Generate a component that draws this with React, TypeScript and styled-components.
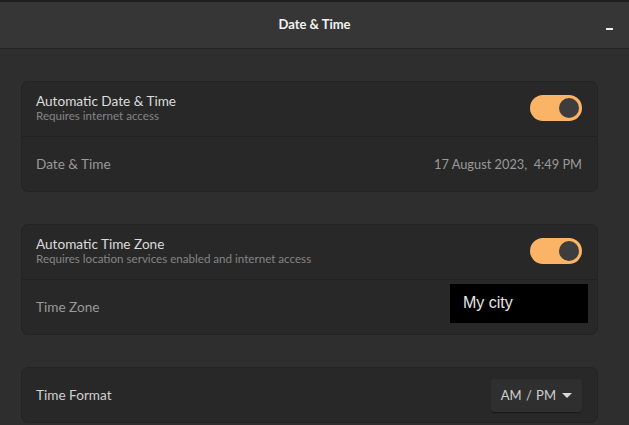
import React, { useState } from 'react'
import styled, { createGlobalStyle } from 'styled-components'

const GlobalStyle = createGlobalStyle`
  html, body {
    margin: 0;
    padding: 0;
    background: #2e2e2e;
  }
  body {
    font-family: 'Lato', 'Noto Sans', sans-serif;
    width: 629px;
    height: 425px;
    overflow: hidden;
  }
`

const App: React.FC = () => {
  const [autoDate, setAutoDate] = useState(true)
  const [autoZone, setAutoZone] = useState(true)
  const [city, setCity] = useState('My city')
  return (
    <Window>
      <GlobalStyle />
      <TopStrip />
      <Header>
        <Title>Date &amp; Time</Title>
        <Minimize aria-label="minimize" />
      </Header>
      <Content>
        <Card>
          <Row>
            <Labels>
              <Label>Automatic Date &amp; Time</Label>
              <Sub>Requires internet access</Sub>
            </Labels>
            <Toggle on={autoDate} onClick={() => setAutoDate(!autoDate)}>
              <Knob />
            </Toggle>
          </Row>
          <Row>
            <Label muted>Date &amp; Time</Label>
            <Value>17 August 2023,&nbsp; 4:49 PM</Value>
          </Row>
        </Card>
        <Card>
          <Row>
            <Labels>
              <Label>Automatic Time Zone</Label>
              <Sub>Requires location services enabled and internet access</Sub>
            </Labels>
            <Toggle on={autoZone} onClick={() => setAutoZone(!autoZone)}>
              <Knob />
            </Toggle>
          </Row>
          <Row>
            <Label muted>Time Zone</Label>
            <CityInput value={city} onChange={(e) => setCity(e.target.value)} />
          </Row>
        </Card>
        <Card>
          <Row>
            <Label light>Time Format</Label>
            <Dropdown>
              AM / PM
              <Caret />
            </Dropdown>
          </Row>
        </Card>
      </Content>
    </Window>
  )
}
export default App

const Window = styled.div`
  display: flex;
  flex-direction: column;
  height: 425px;
  background: #2e2e2e;
`
const TopStrip = styled.div`
  height: 2px;
  background: #1e1e1e;
`
const Header = styled.header`
  position: relative;
  height: 46px;
  display: flex;
  align-items: center;
  justify-content: center;
  background: #363636;
  border-bottom: 1px solid #232323;
`
const Title = styled.h1`
  margin: 0;
  font-size: 13px;
  font-weight: 700;
  color: #f2f2f2;
  margin-top: -3px;
`
const Minimize = styled.span`
  position: absolute;
  right: 16px;
  top: 26px;
  width: 7px;
  height: 2px;
  background: #eeeeee;
`
const Content = styled.main`
  display: flex;
  flex-direction: column;
  gap: 32px;
  padding: 32px 31px 0 21px;
`
const Card = styled.section`
  display: flex;
  flex-direction: column;
  background: #282828;
  border: 1px solid #232323;
  border-radius: 7px;
  & > div + div {
    border-top: 1px solid #222222;
  }
`
const Row = styled.div`
  height: 54px;
  display: flex;
  align-items: center;
  justify-content: space-between;
  padding: 0 15px 0 14px;
`
const Labels = styled.div`
  display: flex;
  flex-direction: column;
  gap: 0;
  margin-top: -3px;
`
const Label = styled.span<{ muted?: boolean; light?: boolean }>`
  font-size: 13.6px;
  color: ${(p) => (p.muted ? '#9a9a9a' : p.light ? '#cfcfcf' : '#dcdcdc')};
`
const Sub = styled.span`
  font-size: 11.6px;
  color: #858585;
`
const Toggle = styled.button<{ on: boolean }>`
  width: 52px;
  height: 26px;
  border-radius: 13px;
  border: none;
  padding: 3px;
  display: flex;
  justify-content: ${(p) => (p.on ? 'flex-end' : 'flex-start')};
  background: ${(p) => (p.on ? '#fbb366' : '#555555')};
  cursor: pointer;
  margin-top: -2px;
`
const Knob = styled.span`
  width: 20px;
  height: 20px;
  border-radius: 50%;
  background: #3d3d3d;
`
const Value = styled.span`
  font-size: 12.8px;
  color: #9a9a9a;
`
const CityInput = styled.input`
  width: 138px;
  height: 39px;
  box-sizing: border-box;
  margin-right: -6px;
  margin-top: -8px;
  padding: 0 13px;
  background: #000000;
  border: none;
  outline: none;
  color: #e6e6e6;
  font-family: 'Liberation Sans', Arial, sans-serif;
  font-size: 16px;
`
const Dropdown = styled.button`
  display: flex;
  align-items: center;
  gap: 6px;
  height: 33px;
  padding: 0 10px 0 10px;
  background: #2f2f2f;
  border: none;
  border-radius: 3px;
  box-shadow: 0 1px 1px rgba(0, 0, 0, 0.4);
  color: #cfcfcf;
  font-family: inherit;
  font-size: 13px;
  word-spacing: 1px;
  cursor: pointer;
`
const Caret = styled.span`
  width: 0;
  height: 0;
  border-left: 5px solid transparent;
  border-right: 5px solid transparent;
  border-top: 5px solid #d8d8d8;
`
